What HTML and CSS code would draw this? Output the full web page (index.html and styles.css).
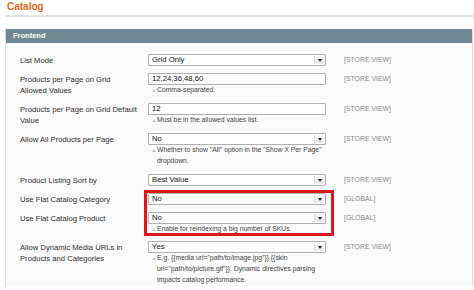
FILE: index.html
```html
<!DOCTYPE html>
<html lang="en">
<head>
  <meta charset="UTF-8">
  <title>Catalog - Frontend</title>
  <link rel="stylesheet" href="styles.css">
</head>
<body>

  <!-- page title -->
  <div class="content-header">
    <h3>Catalog</h3>
  </div>

  <!-- Frontend fieldset -->
  <div class="fieldset">
    <div class="fieldset-head">Frontend</div>
    <div class="fieldset-body">

      <div class="row">
        <div class="label">List Mode</div>
        <div class="value">
          <div class="select">Grid Only<span class="arrow"></span></div>
        </div>
        <div class="scope">[STORE VIEW]</div>
      </div>

      <div class="row">
        <div class="label">Products per Page on Grid<br>Allowed Values</div>
        <div class="value">
          <div class="input">12,24,36,48,60</div>
          <p class="note">Comma-separated.</p>
        </div>
        <div class="scope">[STORE VIEW]</div>
      </div>

      <div class="row">
        <div class="label">Products per Page on Grid Default<br>Value</div>
        <div class="value">
          <div class="input">12</div>
          <p class="note">Must be in the allowed values list.</p>
        </div>
        <div class="scope">[STORE VIEW]</div>
      </div>

      <div class="row">
        <div class="label">Allow All Products per Page</div>
        <div class="value">
          <div class="select">No<span class="arrow"></span></div>
          <p class="note">Whether to show "All" option in the "Show X Per Page"<br>dropdown.</p>
        </div>
        <div class="scope">[STORE VIEW]</div>
      </div>

      <div class="row">
        <div class="label">Product Listing Sort by</div>
        <div class="value">
          <div class="select">Best Value<span class="arrow"></span></div>
        </div>
        <div class="scope">[STORE VIEW]</div>
      </div>

      <div class="row">
        <div class="label">Use Flat Catalog Category</div>
        <div class="value">
          <div class="select">No<span class="arrow"></span></div>
        </div>
        <div class="scope">[GLOBAL]</div>
      </div>

      <div class="row">
        <div class="label">Use Flat Catalog Product</div>
        <div class="value">
          <div class="select">No<span class="arrow"></span></div>
          <p class="note">Enable for reindexing a big number of SKUs.</p>
        </div>
        <div class="scope">[GLOBAL]</div>
      </div>

      <div class="row">
        <div class="label">Allow Dynamic Media URLs in<br>Products and Categories</div>
        <div class="value">
          <div class="select">Yes<span class="arrow"></span></div>
          <p class="note">E.g. {{media url="path/to/image.jpg"}} {{skin<br>url="path/to/picture.gif"}}. Dynamic directives parsing<br>impacts catalog performance.</p>
        </div>
        <div class="scope">[STORE VIEW]</div>
      </div>

    </div>

    <!-- red annotation round the flat catalog settings -->
    <div class="highlight"></div>
  </div>

</body>
</html>
```

FILE: styles.css
```css
body {
  font-family: 'Liberation Sans', Arial, sans-serif;
  background: #fff;
  color: #2f2f2f;
  margin: 0;
  padding: 0;
  overflow: hidden;
}

/* page title */
.content-header {
  margin-left: 5px;
  padding: 1px 0 2px 2px;
  border-bottom: 2px solid #e2e2e2;
}
.content-header h3 {
  margin: 0;
  font-size: 10px;
  line-height: 12px;
  font-weight: bold;
  color: #e0661c;
}

/* fieldset */
.fieldset {
  position: relative;
  margin: 12px 1px 0 5px;
  background: #fafafa;
  border-left: 1px solid #dcdcdc;
  border-right: 1px solid #dcdcdc;
}
.fieldset-head {
  height: 14px;
  line-height: 14px;
  padding-left: 7px;
  background: #6f8992;
  color: #fff;
  font-size: 7.5px;
  font-weight: bold;
}
.fieldset-body {
  padding: 11px 0 0 14px;
}

/* one setting per row */
.row {
  display: grid;
  grid-template-columns: 128px 178px 1fr;
  margin-bottom: 7px;
}
.label {
  font-size: 7.65px;
  line-height: 11px;
  padding-top: 1px;
  color: #2f2f2f;
}
.select, .input {
  position: relative;
  box-sizing: border-box;
  height: 12px;
  line-height: 10px;
  padding-left: 3px;
  border: 1px solid #b0b0b0;
  border-radius: 1px;
  background: #fff;
  font-size: 7.7px;
  color: #111;
}
.select .arrow {
  position: absolute;
  top: 1px;
  right: 1px;
  width: 9px;
  height: 8px;
  border-left: 1px solid #d8d8d8;
  background: linear-gradient(#fdfdfd, #e8e8e8);
}
.select .arrow::after {
  content: "";
  position: absolute;
  left: 3px;
  top: 3px;
  border-left: 2px solid transparent;
  border-right: 2px solid transparent;
  border-top: 3px solid #222;
}
.note {
  position: relative;
  margin: 0;
  padding-left: 9px;
  font-size: 6.8px;
  line-height: 10.8px;
  color: #444;
}
.note::before {
  content: "";
  position: absolute;
  left: 4px;
  top: 4px;
  border-left: 2px solid transparent;
  border-right: 2px solid transparent;
  border-bottom: 3px solid #c4c4c4;
}
.scope {
  padding-left: 18px;
  font-size: 6.9px;
  line-height: 12px;
  color: #8a8a8a;
}

/* red box drawn over the two flat catalog rows */
.highlight {
  position: absolute;
  left: 138px;
  top: 161px;
  width: 190px;
  height: 46px;
  box-sizing: border-box;
  border: 3px solid #d8171e;
}
```
